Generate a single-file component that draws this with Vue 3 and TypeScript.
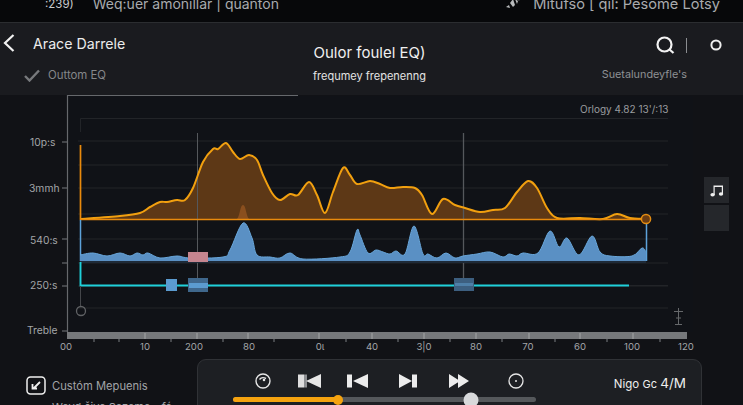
<script setup lang="ts">
type Pt = [number, number];

const orange: Pt[] = [[80,219],[120,216],[140,213],[150,207],[160,202],[167,202],[177,200],[185,200],[193,188],[203,162],[213,149],[218,149],[226,143],[233,152],[240,159],[249,155],[257,160],[263,175],[272,193],[280,200],[290,194],[298,195],[309,182],[317,195],[325,213],[333,192],[343,168],[350,175],[357,184],[370,181],[380,184],[390,188],[403,187],[415,188],[422,195],[432,214],[443,199],[455,205],[465,208],[480,212],[493,210],[505,208],[517,192],[528,181],[537,188],[547,208],[557,218],[580,218],[603,219],[617,214],[630,218],[646,219]];

const blue: Pt[] = [[80,255],[93,253],[107,256],[120,253],[130,256],[137,253],[143,255],[148,253],[160,258],[177,256],[190,258],[223,257],[230,250],[243,223],[252,238],[257,255],[270,257],[280,258],[290,253],[303,259],[340,257],[350,252],[357,230],[360,235],[368,253],[376,250],[383,252],[390,254],[396,251],[405,254],[414,226],[423,254],[428,254],[437,258],[446,253],[455,258],[463,256],[477,254],[490,252],[503,257],[509,254],[517,256],[523,253],[538,253],[550,231],[559,247],[567,238],[579,255],[592,236],[600,252],[610,256],[632,256],[642,248],[646,252]];

// catmull-rom through the measured points
function smooth(pts: Pt[]): string {
  let d = `M${pts[0][0]} ${pts[0][1]}`;
  for (let i = 0; i < pts.length - 1; i++) {
    const p0 = pts[Math.max(i - 1, 0)];
    const p1 = pts[i];
    const p2 = pts[i + 1];
    const p3 = pts[Math.min(i + 2, pts.length - 1)];
    const c1x = p1[0] + (p2[0] - p0[0]) / 6;
    const c1y = p1[1] + (p2[1] - p0[1]) / 6;
    const c2x = p2[0] - (p3[0] - p1[0]) / 6;
    const c2y = p2[1] - (p3[1] - p1[1]) / 6;
    d += ` C${c1x.toFixed(1)} ${c1y.toFixed(1)} ${c2x.toFixed(1)} ${c2y.toFixed(1)} ${p2[0]} ${p2[1]}`;
  }
  return d;
}

const orangeLine = smooth(orange);
const orangeFill = orangeLine + " L646 219 L80 219 Z";
const blueLine = smooth(blue);
const blueFill = blueLine + " L646 261 L80 261 Z";

const gridYs = [141, 165, 188, 214, 239, 263, 286, 308];
const yTicks = [142, 188, 239, 263, 286, 331];
const yLabels = [
  { y: 146, text: "10p:s", x: 30 },
  { y: 192, text: "3mmh", x: 29 },
  { y: 244, text: "540:s", x: 30 },
  { y: 289, text: "250:s", x: 30 },
  { y: 334, text: "Treble", x: 27 },
];
const xLabels = [
  { x: 66, text: "00" }, { x: 145, text: "10" }, { x: 194, text: "200" }, { x: 249, text: "80" },
  { x: 320, text: "0ι" }, { x: 372, text: "40" }, { x: 424, text: "3|0" }, { x: 476, text: "80" },
  { x: 528, text: "70" }, { x: 580, text: "60" }, { x: 632, text: "100" }, { x: 686, text: "120" },
];
const lowTicks = [94, 119, 171, 223, 274, 346, 398, 450, 502, 555, 607, 660];
const barTicks = [145, 197, 248, 319, 372, 424, 476, 529, 580, 633];

const played = (105 / 303) * 100;
const handle = (238 / 303) * 100;
</script>

<template>
  <div class="screen">
    <div class="topbar">
      <div class="top-left">
        <span class="clock">:239)</span>
        <span>Weq:uer amonillar | quanton</span>
      </div>
      <div class="top-right">
        <svg width="16" height="12" viewBox="0 0 16 12" fill="#b9bbbd">
          <path d="M1 9l3-2 1 3zM5 5l3-4 2 6-2 2zM10 1l3 2-1 3zM13 1l2-1-1 3z" />
        </svg>
        <span>Mitufso [ qil: Pesome Lotsy</span>
      </div>
    </div>

    <header class="head">
      <div class="head-left">
        <div class="back-row">
          <svg width="12" height="18" viewBox="0 0 12 18" fill="none" stroke="#f2f2f2" stroke-width="2.2">
            <path d="M10.5 1L2 9l8.5 8" />
          </svg>
          <span class="back-title">Arace Darrele</span>
        </div>
        <div class="check-row">
          <svg width="16" height="13" viewBox="0 0 16 13" fill="none" stroke="#77797c" stroke-width="2.4">
            <path d="M1 7l4.5 4.5L15 1.5" />
          </svg>
          <span>Outtom EQ</span>
        </div>
      </div>
      <div class="head-mid">
        <div class="mid-title">Oulor foulel EQ)</div>
        <div class="mid-sub">frequmey frepenenng</div>
      </div>
      <div class="head-right">
        <div class="head-icons">
          <svg width="19" height="18" viewBox="0 0 19 18" fill="none" stroke="#f2f2f2" stroke-width="2.2">
            <circle cx="8.5" cy="8.5" r="7" />
            <path d="M13.5 13.5l4 3.5" />
          </svg>
          <i class="divider"></i>
          <svg width="12" height="12" viewBox="0 0 12 12" fill="none" stroke="#eeeeee" stroke-width="2">
            <circle cx="6" cy="6" r="4.6" />
          </svg>
        </div>
        <div class="right-sub">Suetalundeyfle's</div>
      </div>
    </header>

    <main class="body">
      <svg class="chart" width="700" height="258" viewBox="0 95 700 258" font-family="Inter, sans-serif">
        <rect x="68" y="96" width="625" height="236" fill="#101217" />
        <path d="M298 95.5H67.5V332" fill="none" stroke="#66686c" stroke-width="1.2" />
        <path d="M80.5 132V118.5H668" fill="none" stroke="#222428" />
        <text x="580" y="113" font-size="10" fill="#9a9c9f">Orlogy 4.82 13'/:13</text>

        <line v-for="y in gridYs" :key="y" x1="78" x2="668" :y1="y" :y2="y" stroke="#222428" />
        <line v-for="y in yTicks" :key="'t' + y" x1="62" x2="67" :y1="y" :y2="y" stroke="#77797c" />
        <text v-for="l in yLabels" :key="l.text" :x="l.x" :y="l.y" font-size="10.3" fill="#a3a5a8">{{ l.text }}</text>

        <path :d="orangeFill" fill="#5d3816" />
        <path d="M237 219C240 216 240 205 243 205C246 205 246 216 249 219Z" fill="#8a4f1e" />
        <line x1="197.5" x2="197.5" y1="133" y2="278" stroke="#55585c" />
        <line x1="463.5" x2="463.5" y1="133" y2="290" stroke="#55585c" stroke-width="1.3" />
        <path :d="orangeLine" fill="none" stroke="#f2a00f" stroke-width="2" />
        <path d="M80.5 145V219.5H646" fill="none" stroke="#e98a0c" stroke-width="1.7" />

        <path d="M80.5 220V261M646.5 220V261" fill="none" stroke="#5da2da" stroke-width="1.5" />
        <path :d="blueFill" fill="#5a90c4" />
        <path :d="blueLine" fill="none" stroke="#68a6da" stroke-width="1" />
        <rect x="80" y="261" width="566" height="2" fill="#1e2a38" />

        <path d="M80.5 262V285.5H629" fill="none" stroke="#1fd0da" stroke-width="1.9" />
        <path d="M629 285.5H668" stroke="#222428" />
        <rect x="188" y="252" width="20" height="10" fill="#c5858f" />
        <rect x="166" y="279" width="11" height="12" fill="#5b9bd0" />
        <rect x="188" y="278" width="20" height="14" fill="#3f678c" />
        <rect x="189" y="283" width="19" height="5" fill="#5b9bd0" />
        <rect x="454" y="278" width="20" height="13" fill="#3d5f80" />
        <rect x="455" y="283" width="18" height="3" fill="#4f7fa8" />

        <line x1="80.5" x2="80.5" y1="286" y2="306" stroke="#44464a" />
        <circle cx="81" cy="311" r="4.5" fill="none" stroke="#606265" stroke-width="1.3" />
        <circle cx="646" cy="219" r="4.6" fill="#6b3c12" stroke="#e38c12" stroke-width="1.5" />
        <path d="M678.5 308V325M674 311.5H683M675 324.5H682M676 318H681" fill="none" stroke="#66686b" />

        <rect x="67" y="332" width="620" height="7" fill="#76787b" />
        <line v-for="x in barTicks" :key="'b' + x" :x1="x" :x2="x" y1="333" y2="339" stroke="#a4a6a8" />
        <line v-for="x in lowTicks" :key="'l' + x" :x1="x" :x2="x" y1="339" y2="342" stroke="#7b7d80" />
        <text v-for="l in xLabels" :key="l.x" :x="l.x" y="350" text-anchor="middle" font-size="9.6" fill="#a3a5a8">{{ l.text }}</text>
      </svg>

      <aside class="side">
        <button class="side-btn">
          <svg width="14" height="13" viewBox="0 0 14 13" fill="#f0f0f0">
            <path d="M3.5 1.5H13V10H11.8V3H4.7V11H3.5Z" />
            <ellipse cx="2.6" cy="10.8" rx="2.2" ry="1.7" />
            <ellipse cx="11" cy="10" rx="2.2" ry="1.7" />
          </svg>
        </button>
        <button class="side-btn"></button>
      </aside>
    </main>

    <footer class="foot">
      <div class="custom">
        <div class="custom-row">
          <svg width="20" height="19" viewBox="0 0 20 19" fill="none" stroke="#efefef">
            <rect x="1" y="1" width="18" height="17" rx="3.5" stroke-width="1.5" />
            <path d="M14 6L8 12M6.5 8v4.5H11" stroke-width="1.8" />
          </svg>
          <span>Custóm Mepuenis</span>
        </div>
        <div class="custom-note">Weyd čive Sezeme. -fé</div>
      </div>

      <section class="player">
        <div class="transport">
          <div class="controls">
            <svg width="16" height="16" viewBox="0 0 16 16" fill="none" stroke="#e6e6e6" stroke-width="1.4">
              <circle cx="8" cy="8" r="7" />
              <path d="M4.5 6.5C6 4.5 9 4.5 11 5.5" />
              <circle cx="9" cy="7" r=".6" />
            </svg>
            <svg width="24" height="14" viewBox="0 0 24 14">
              <rect width="6" height="13" y=".5" fill="#dedede" />
              <rect x="6" width="3" height="13" y=".5" fill="#8d8f92" />
              <path d="M23 0V14L8 7Z" fill="#e6e6e6" />
            </svg>
            <svg width="21" height="14" viewBox="0 0 21 14" fill="#ececec">
              <rect width="5" height="13" y=".5" />
              <path d="M21 0V14L6 7Z" />
            </svg>
            <svg width="18" height="14" viewBox="0 0 18 14" fill="#ececec">
              <path d="M0 0L13 7L0 14Z" />
              <rect x="13" y=".5" width="5" height="13" />
            </svg>
            <svg width="20" height="14" viewBox="0 0 20 14" fill="#ececec">
              <path d="M0 0L11 7L0 14ZM9 0L20 7L9 14Z" />
            </svg>
            <svg width="16" height="16" viewBox="0 0 16 16" fill="none" stroke="#e6e6e6" stroke-width="1.3">
              <circle cx="8" cy="8" r="7" />
              <circle cx="8" cy="8" r="1" fill="#e6e6e6" stroke="none" />
            </svg>
          </div>
          <div class="track">
            <div class="track-fill" :style="{ width: played + '%' }"></div>
            <span class="dot" :style="{ left: played + '%' }"></span>
            <span class="handle" :style="{ left: handle + '%' }"></span>
          </div>
        </div>
        <div class="player-label">Nigo <span class="narrow">Gc</span> <span class="wide">4/M</span></div>
      </section>
    </footer>
  </div>
</template>

<style scoped>
.screen {
  width: 743px;
  height: 405px;
  overflow: hidden;
  display: flex;
  flex-direction: column;
  background: #111216;
  font-family: Inter, "Liberation Sans", sans-serif;
  color: #e8e8e8;
}
.topbar {
  flex: 0 0 13px;
  height: 13px;
  display: flex;
  justify-content: space-between;
  align-items: flex-end;
  padding: 0 23px 9px 45px;
  background: #07080a;
  border-bottom: 1px solid #2b2d30;
  font-size: 14px;
  line-height: 18px;
  color: #a9abae;
  white-space: nowrap;
}
.top-left,
.top-right {
  display: flex;
  align-items: center;
  height: 18px;
}
.top-right {
  font-size: 14.6px;
}
.clock {
  font-size: 11.5px;
  color: #c8cacc;
  margin-right: 19px;
}
.top-right svg {
  margin-right: 12px;
}
.head {
  flex: 0 0 72px;
  display: grid;
  grid-template-columns: 1fr auto 1fr;
  background: #1a1b1f;
}
.head-left {
  padding: 10px 0 0 3px;
}
.back-row {
  display: flex;
  align-items: center;
  height: 20px;
  gap: 18px;
}
.back-title {
  font-size: 14.2px;
  color: #ececec;
}
.check-row {
  display: flex;
  align-items: center;
  gap: 8px;
  margin: 14px 0 0 21px;
  height: 16px;
  font-size: 11.4px;
  color: #85878a;
}
.head-mid {
  padding: 20px 4px 0 0;
  text-align: center;
}
.mid-title {
  font-size: 15px;
  line-height: 20px;
  color: #f0f0f0;
}
.mid-sub {
  margin-top: 5px;
  font-size: 11px;
  line-height: 16px;
  color: #e4e4e4;
}
.head-right {
  display: flex;
  flex-direction: column;
  align-items: flex-end;
  padding: 13px 21px 0 0;
}
.head-icons {
  display: flex;
  align-items: center;
  height: 18px;
}
.divider {
  width: 1px;
  height: 15px;
  margin: 0 23px 0 11px;
  background: #8b8d90;
}
.right-sub {
  margin: 13px 35px 0 0;
  font-size: 10.8px;
  line-height: 16px;
  color: #8f9194;
}
.body {
  flex: 0 0 258px;
  display: flex;
  gap: 4px;
}
.chart {
  display: block;
}
.side {
  display: flex;
  flex-direction: column;
  gap: 2px;
  padding-top: 82px;
}
.side-btn {
  display: flex;
  align-items: center;
  justify-content: center;
  width: 25px;
  height: 26px;
  padding: 0;
  border: 0;
  background: #25272b;
}
.foot {
  flex: 1;
  min-height: 0;
  display: flex;
  padding-top: 6px;
}
.custom {
  width: 197px;
  padding: 17px 0 0 26px;
  box-sizing: border-box;
}
.custom-row {
  display: flex;
  align-items: center;
  gap: 6px;
  height: 19px;
  font-size: 11.2px;
  color: #a2a4a7;
}
.custom-note {
  margin: 5px 0 0 26px;
  font-size: 11px;
  color: #a2a4a7;
  white-space: nowrap;
}
.player {
  width: 505px;
  height: 70px;
  flex: none;
  box-sizing: border-box;
  display: flex;
  justify-content: space-between;
  padding: 10px 15px 0 35px;
  background: #1d1f23;
  border: 1px solid #303236;
  border-radius: 9px;
}
.transport {
  width: 303px;
}
.controls {
  display: grid;
  grid-template-columns: 47px 47px 48px 54px 48px 65px;
  justify-items: center;
  align-items: center;
  height: 22px;
  margin-left: 6px;
}
.track {
  position: relative;
  height: 5px;
  margin-top: 5px;
  border-radius: 3px;
  background: #55585b;
}
.track-fill {
  height: 100%;
  border-radius: 3px;
  background: #f5a30f;
}
.dot,
.handle {
  position: absolute;
  top: 50%;
  border-radius: 50%;
  transform: translate(-50%, -50%);
}
.dot {
  width: 10px;
  height: 10px;
  background: #f5a30f;
}
.handle {
  width: 15px;
  height: 15px;
  background: #d8d9da;
}
.player-label {
  margin-top: 3px;
  font-size: 11.5px;
  line-height: 20px;
  color: #eeeeee;
  white-space: nowrap;
}
.narrow {
  font-size: 11px;
}
.wide {
  font-size: 13.5px;
}
</style>

<style>
html,
body {
  margin: 0;
  background: #111216;
}
</style>
